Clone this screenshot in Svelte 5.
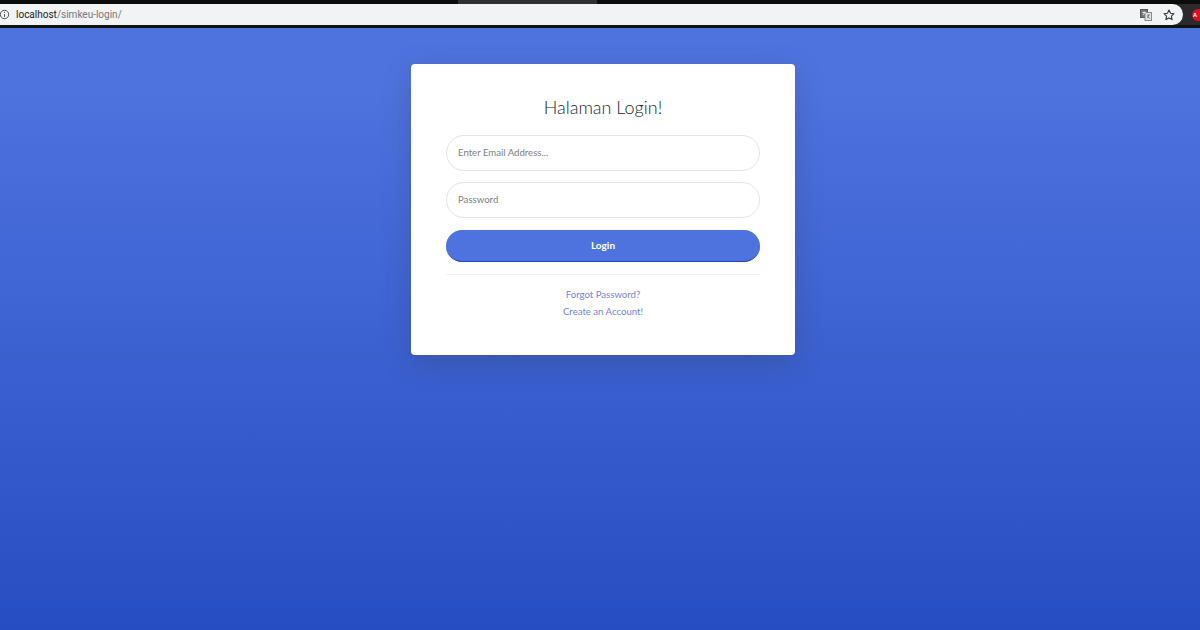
<script>
    let email = '';
    let password = '';
</script>

<style>
    :global(body) {
        margin: 0;
    }

    .page {
        width: 1200px;
        height: 630px;
        overflow: hidden;
        display: flex;
        flex-direction: column;
        font-family: "Lato", "Noto Sans", sans-serif;
    }

    .tabstrip {
        height: 4px;
        background: #0b0b0b;
        padding-left: 458px;
    }

    .tab {
        width: 139px;
        height: 4px;
        background: #303030;
    }

    .toolbar {
        height: 21px;
        background: #2a2a2a;
        display: flex;
        align-items: stretch;
        justify-content: space-between;
    }

    .omnibox {
        width: 1183px;
        background: #f1f3f4;
        border-radius: 0 11px 11px 0;
        display: flex;
        align-items: center;
        padding: 0 8px 0 0;
        box-sizing: border-box;
    }

    .info {
        flex: none;
    }

    .url {
        font-family: "Roboto", "Liberation Sans", sans-serif;
        font-size: 10px;
        color: #777;
        margin-left: 6px;
        flex: 1;
    }

    .url b {
        font-weight: 400;
        color: #222;
    }

    .omnibox svg + svg {
        margin-left: 11px;
    }

    .abp {
        width: 8px;
        height: 12px;
        margin-top: 5px;
        border-radius: 6px 0 0 6px;
        background: #d8112a;
        color: #fff;
        font: 700 5.5px/12px "Liberation Sans", sans-serif;
        padding-left: 1px;
        box-sizing: border-box;
    }

    .edge {
        height: 3px;
        background: #121210;
    }

    .content {
        flex: 1;
        background: linear-gradient(180deg, #4e73df 10%, #274dc2 100%);
        padding: 36px 0 0 6px;
        display: flex;
        justify-content: center;
        align-items: flex-start;
    }

    .card {
        width: 384px;
        height: 291px;
        box-sizing: border-box;
        background: #fff;
        border-radius: 4px;
        padding: 30px 35px 0;
        box-shadow: 0 8px 28px 0 rgba(58, 59, 69, 0.28);
    }

    h1 {
        margin: 0 0 15px;
        font-size: 18px;
        line-height: 26px;
        font-weight: 300;
        color: #24262c;
        text-align: center;
    }

    form {
        display: flex;
        flex-direction: column;
        gap: 11px;
    }

    input {
        width: 100%;
        height: 36px;
        box-sizing: border-box;
        padding: 0 11px 2px;
        border: 1.5px solid #e2e3ef;
        border-radius: 18px;
        font-family: inherit;
        font-size: 9.6px;
        outline: none;
        color: #6e707e;
    }

    input::placeholder {
        color: #7d7f88;
        opacity: 1;
    }

    button {
        height: 32px;
        margin-top: 1px;
        padding: 0 0 2px;
        border: none;
        border-bottom: 1px solid #1d47c4;
        border-radius: 16px;
        background: #4e73df;
        color: #fff;
        font-family: inherit;
        font-size: 10px;
        font-weight: 700;
    }

    hr {
        margin: 12px 0 0;
        border: none;
        border-top: 1.5px solid #f0f1f3;
    }

    .links {
        margin-top: 11px;
        display: flex;
        flex-direction: column;
        align-items: center;
    }

    .links a {
        font-size: 9.6px;
        line-height: 17px;
        color: #7584e2;
        text-decoration: none;
    }
</style>

<div class="page">
    <div class="tabstrip"><div class="tab"></div></div>
    <div class="toolbar">
        <div class="omnibox">
            <svg class="info" width="10" height="11" viewBox="0 0 10 11" fill="none" stroke="#555" stroke-width="1">
                <circle cx="4.5" cy="5.5" r="4.2" />
                <path d="M4.5 5v3M4.5 2.8v1.1" />
            </svg>
            <span class="url"><b>localhost</b>/simkeu-login/</span>
            <svg width="12" height="12" viewBox="0 0 12 12">
                <rect x="0.5" y="0.5" width="7" height="8" fill="#777" stroke="#555" />
                <rect x="5" y="3.5" width="6.5" height="8" fill="#e4e5e6" stroke="#888" />
                <path d="M2.5 3.5h3M4 2.5v1M3 6l2-2.5" stroke="#fff" stroke-width="0.8" fill="none" />
                <path d="M7 6h3M8.5 6c0 2-1 3-1.6 3.4M7.6 7.4c.5 1 1.3 1.6 2.4 2" stroke="#555" stroke-width="0.7" fill="none" />
            </svg>
            <svg width="12" height="12" viewBox="0 0 12 12" fill="none" stroke="#333" stroke-width="1.1" stroke-linejoin="round">
                <path d="M6 1l1.5 3.3 3.5.4-2.6 2.4.7 3.5L6 8.9l-3.1 1.7.7-3.5L1 4.7l3.5-.4z" />
            </svg>
        </div>
        <div class="abp">A</div>
    </div>
    <div class="edge"></div>

    <div class="content">
        <div class="card">
            <h1>Halaman Login!</h1>
            <form on:submit|preventDefault>
                <input type="text" placeholder="Enter Email Address..." bind:value={email} />
                <input type="password" placeholder="Password" bind:value={password} />
                <button type="submit">Login</button>
            </form>
            <hr />
            <div class="links">
                <a href="#forgot">Forgot Password?</a>
                <a href="#register">Create an Account!</a>
            </div>
        </div>
    </div>
</div>
